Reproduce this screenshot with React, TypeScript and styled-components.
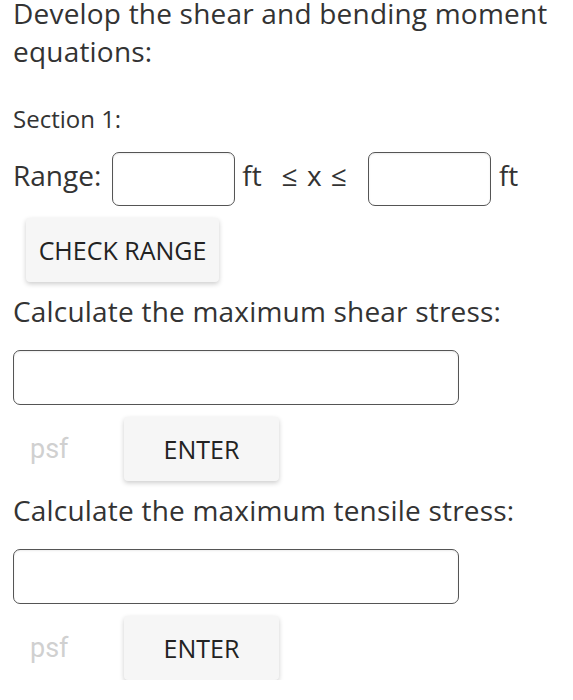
import styled, { createGlobalStyle } from 'styled-components'

const GlobalStyle = createGlobalStyle`
  body {
    margin: 0;
    background: #fff;
    font-family: "Open Sans", "Liberation Sans", sans-serif;
    color: #333;
  }
`

const Page = styled.div`
  padding: 0 13px;
`

const Title = styled.div`
  display: flex;
  flex-direction: column;
  gap: 12px;
  font-size: 28px;
  line-height: 26px;
  letter-spacing: 0.2px;
`

const SectionLabel = styled.div`
  font-size: 24px;
  line-height: 30px;
  margin-top: 40px;
`

const RangeRow = styled.div`
  display: flex;
  align-items: flex-start;
  margin-top: 18px;
  font-size: 28px;
`

const RangeText = styled.span<{ gap?: number }>`
  line-height: 46px;
  margin-left: ${p => p.gap ?? 0}px;
  word-spacing: 2px;
`

const Box = styled.div<{ w: number; h: number; gap?: number }>`
  width: ${p => p.w}px;
  height: ${p => p.h}px;
  margin-left: ${p => p.gap ?? 0}px;
  box-sizing: border-box;
  border: 1.5px solid #555;
  border-radius: 7px;
  background: #fff;
  box-shadow: inset 0 1px 2px rgba(0, 0, 0, 0.08);
`

const Button = styled.button`
  font-family: "Open Sans", "Liberation Sans", sans-serif;
  font-size: 25px;
  color: #222;
  background: #f6f6f6;
  border: none;
  border-radius: 4px;
  box-shadow: 0 2px 5px rgba(0, 0, 0, 0.2);
  height: 64px;
  padding: 0;
  display: block;
`

const CheckButton = styled(Button)`
  margin: 12px 0 0 13px;
  width: 193px;
`

const Question = styled.div`
  font-size: 28px;
  line-height: 38px;
  letter-spacing: 0.2px;
  margin-top: 10px;
`

const AnswerBox = styled(Box)`
  margin-top: 20px;
`

const UnitRow = styled.div`
  display: flex;
  align-items: center;
  margin-top: 12px;
`

const Unit = styled.span`
  font-family: Roboto, "Liberation Sans", sans-serif;
  font-size: 27px;
  color: #d0d0d0;
  width: 111px;
  padding-left: 17px;
  box-sizing: border-box;
`

const EnterButton = styled(Button)`
  width: 155px;
`

function Answer({ label }: { label: string }) {
  return (
    <>
      <Question>{label}</Question>
      <AnswerBox w={446} h={55} />
      <UnitRow>
        <Unit>psf</Unit>
        <EnterButton>ENTER</EnterButton>
      </UnitRow>
    </>
  )
}

export default function App() {
  return (
    <>
      <GlobalStyle />
      <Page>
        <Title>
          <span>Develop the shear and bending moment</span>
          <span>equations:</span>
        </Title>
        <SectionLabel>Section 1:</SectionLabel>
        <RangeRow>
          <RangeText>Range:</RangeText>
          <Box w={123} h={54} gap={11} />
          <RangeText gap={7}>ft</RangeText>
          <RangeText gap={20}>≤ x ≤</RangeText>
          <Box w={123} h={54} gap={21} />
          <RangeText gap={8}>ft</RangeText>
        </RangeRow>
        <CheckButton>CHECK RANGE</CheckButton>
        <Answer label="Calculate the maximum shear stress:" />
        <Answer label="Calculate the maximum tensile stress:" />
      </Page>
    </>
  )
}
